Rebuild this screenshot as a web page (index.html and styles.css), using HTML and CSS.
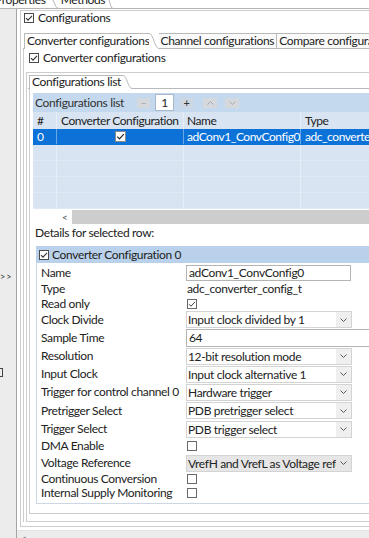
FILE: index.html
```html
<!DOCTYPE html>
<html lang="en">
<head>
  <meta charset="UTF-8">
  <meta name="viewport" content="width=device-width, initial-scale=1.0">
  <title>Converter configurations</title>
  <link rel="stylesheet" href="styles.css">
</head>
<body>
  <div class="view-tabs">
    <span class="view-tab first">Properties</span>
    <svg class="slant" width="11" height="9" viewBox="0 0 11 9"><path d="M0 -6 C5 -6 6 8.5 11 8.5" fill="none" stroke="#b4b4b4"/></svg>
    <span class="view-tab">Methods</span>
    <svg class="slant" width="6" height="9" viewBox="0 0 6 9"><path d="M0 -2 C3 -2 3 8.5 6 8.5" fill="none" stroke="#b4b4b4"/></svg>
  </div>

  <div class="workspace">
    <div class="side">
      <div class="side-arrows">&gt;&gt;</div>
      <div class="side-box"></div>
    </div>

    <div class="view">
      <div class="view-body">
        <div class="panel outer">
          <div class="check-row">
            <svg class="cb" width="10" height="10" viewBox="0 0 10 10"><rect x=".5" y=".5" width="9" height="9" fill="#fff" stroke="#4a4a4a"/><path d="M2 5.2L4 7.2L8 2.8" fill="none" stroke="#333" stroke-width="1.1"/></svg>
            <span>Configurations</span>
          </div>

          <div class="tab-row">
            <span class="tab selected">Converter configurations</span>
            <svg class="slant" width="10" height="16" viewBox="0 0 10 16"><path d="M0 0H0.5C4.5 0.5 5.5 15.5 10 15.5V16H0Z" fill="#fff"/><path d="M0 .5C4.5 .5 5.5 15.5 10 15.5" fill="none" stroke="#b9b9b9"/></svg>
            <span class="tab plain">Channel configurations</span>
            <span class="tab">Compare configurations</span>
          </div>

          <div class="tab-body">
            <div class="check-row">
              <svg class="cb" width="10" height="10" viewBox="0 0 10 10"><rect x=".5" y=".5" width="9" height="9" fill="#fff" stroke="#4a4a4a"/><path d="M2 5.2L4 7.2L8 2.8" fill="none" stroke="#333" stroke-width="1.1"/></svg>
              <span>Converter configurations</span>
            </div>

            <div class="panel list-panel">
              <div class="tab-row small">
                <span class="tab selected">Configurations list</span>
                <svg class="slant" width="9" height="14" viewBox="0 0 9 14"><path d="M0 0H0.5C4 0.5 5 13.5 9 13.5V14H0Z" fill="#fff"/><path d="M0 .5C4 .5 5 13.5 9 13.5" fill="none" stroke="#b9b9b9"/></svg>
              </div>

              <div class="list-body">
                <div class="table">
                  <div class="table-bar">
                    <span class="bar-title">Configurations list</span>
                    <span class="bar-btn off">&ndash;</span>
                    <span class="bar-input">1</span>
                    <span class="bar-btn plus">+</span>
                    <span class="bar-btn off up"><svg width="7" height="4" viewBox="0 0 7 4"><path d="M.5 3.5L3.5 .5L6.5 3.5" fill="none" stroke="#a9a9a9"/></svg></span>
                    <span class="bar-btn off down"><svg width="7" height="4" viewBox="0 0 7 4"><path d="M.5 .5L3.5 3.5L6.5 .5" fill="none" stroke="#a9a9a9"/></svg></span>
                  </div>

                  <div class="grid-head">
                    <span class="cell">#</span>
                    <span class="cell">Converter Configuration</span>
                    <span class="cell name">Name</span>
                    <span class="cell">Type</span>
                  </div>
                  <div class="grid-row selected">
                    <span class="cell">0</span>
                    <span class="cell center"><svg class="cb" width="11" height="11" viewBox="0 0 11 11"><rect x=".5" y=".5" width="10" height="10" fill="#fff" stroke="#8a8a8a"/><path d="M2.3 5.6L4.5 7.8L8.8 3.2" fill="none" stroke="#222" stroke-width="1.2"/></svg></span>
                    <span class="cell name">adConv1_ConvConfig0</span>
                    <span class="cell">adc_converter_config_t</span>
                  </div>
                  <div class="grid-row"><span class="cell"></span><span class="cell"></span><span class="cell"></span><span class="cell"></span></div>
                  <div class="grid-row"><span class="cell"></span><span class="cell"></span><span class="cell"></span><span class="cell"></span></div>
                  <div class="grid-row"><span class="cell"></span><span class="cell"></span><span class="cell"></span><span class="cell"></span></div>
                  <div class="grid-row"><span class="cell"></span><span class="cell"></span><span class="cell"></span><span class="cell"></span></div>

                  <div class="table-scroll">
                    <span class="scroll-left">&lt;</span>
                    <span class="scroll-thumb"></span>
                  </div>
                </div>

                <div class="details-label">Details for selected row:</div>

                <div class="group">
                  <div class="group-head">
                    <svg class="cb" width="10" height="10" viewBox="0 0 10 10"><rect x=".5" y=".5" width="9" height="9" fill="#fff" stroke="#4a4a4a"/><path d="M2 5.2L4 7.2L8 2.8" fill="none" stroke="#333" stroke-width="1.1"/></svg>
                    <span>Converter Configuration 0</span>
                  </div>

                  <div class="form">
                    <span class="label">Name</span>
                    <span class="field">adConv1_ConvConfig0</span>

                    <span class="label">Type</span>
                    <span class="value">adc_converter_config_t</span>

                    <span class="label">Read only</span>
                    <span class="value"><svg class="cb" width="10" height="10" viewBox="0 0 10 10"><rect x=".5" y=".5" width="9" height="9" fill="#fff" stroke="#6a6a6a"/><path d="M2 5.2L4 7.2L8 2.8" fill="none" stroke="#444" stroke-width="1"/></svg></span>

                    <span class="label">Clock Divide</span>
                    <span class="select"><span class="select-text">Input clock divided by 1</span><span class="select-arrow"><svg width="7" height="4" viewBox="0 0 7 4"><path d="M.5 .5L3.5 3.5L6.5 .5" fill="none" stroke="#5a5a5a"/></svg></span></span>

                    <span class="label">Sample Time</span>
                    <span class="field wide">64</span>

                    <span class="label">Resolution</span>
                    <span class="select"><span class="select-text">12-bit resolution mode</span><span class="select-arrow"><svg width="7" height="4" viewBox="0 0 7 4"><path d="M.5 .5L3.5 3.5L6.5 .5" fill="none" stroke="#5a5a5a"/></svg></span></span>

                    <span class="label">Input Clock</span>
                    <span class="select"><span class="select-text">Input clock alternative 1</span><span class="select-arrow"><svg width="7" height="4" viewBox="0 0 7 4"><path d="M.5 .5L3.5 3.5L6.5 .5" fill="none" stroke="#5a5a5a"/></svg></span></span>

                    <span class="label">Trigger for control channel 0</span>
                    <span class="select"><span class="select-text">Hardware trigger</span><span class="select-arrow"><svg width="7" height="4" viewBox="0 0 7 4"><path d="M.5 .5L3.5 3.5L6.5 .5" fill="none" stroke="#5a5a5a"/></svg></span></span>

                    <span class="label">Pretrigger Select</span>
                    <span class="select"><span class="select-text">PDB pretrigger select</span><span class="select-arrow"><svg width="7" height="4" viewBox="0 0 7 4"><path d="M.5 .5L3.5 3.5L6.5 .5" fill="none" stroke="#5a5a5a"/></svg></span></span>

                    <span class="label">Trigger Select</span>
                    <span class="select"><span class="select-text">PDB trigger select</span><span class="select-arrow"><svg width="7" height="4" viewBox="0 0 7 4"><path d="M.5 .5L3.5 3.5L6.5 .5" fill="none" stroke="#5a5a5a"/></svg></span></span>

                    <span class="label">DMA Enable</span>
                    <span class="value"><svg class="cb" width="10" height="10" viewBox="0 0 10 10"><rect x=".5" y=".5" width="9" height="9" fill="#fff" stroke="#6a6a6a"/></svg></span>

                    <span class="label">Voltage Reference</span>
                    <span class="select disabled"><span class="select-text">VrefH and VrefL as Voltage reference</span><span class="select-arrow"><svg width="7" height="4" viewBox="0 0 7 4"><path d="M.5 .5L3.5 3.5L6.5 .5" fill="none" stroke="#5a5a5a"/></svg></span></span>

                    <span class="label">Continuous Conversion</span>
                    <span class="value"><svg class="cb" width="10" height="10" viewBox="0 0 10 10"><rect x=".5" y=".5" width="9" height="9" fill="#fff" stroke="#6a6a6a"/></svg></span>

                    <span class="label">Internal Supply Monitoring</span>
                    <span class="value"><svg class="cb" width="10" height="10" viewBox="0 0 10 10"><rect x=".5" y=".5" width="9" height="9" fill="#fff" stroke="#6a6a6a"/></svg></span>
                  </div>
                </div>
              </div>
            </div>
          </div>
        </div>
      </div>

      <div class="view-scroll"><span>&lt;</span></div>
    </div>
  </div>
</body>
</html>
```

FILE: styles.css
```css
* {
  box-sizing: border-box;
}

body {
  margin: 0;
  width: 369px;
  height: 538px;
  overflow: hidden;
  background-color: #fff;
  color: #222;
  font-family: Lato, "Noto Sans", sans-serif;
  font-size: 12px;
  line-height: 14px;
  letter-spacing: -0.35px;
}

svg {
  display: block;
  flex: none;
}

/* top view tabs, cut off by the window */
.view-tabs {
  display: flex;
  height: 9px;
  overflow: hidden;
  border-bottom: 1px solid #b4b4b4;
}

.view-tab {
  line-height: 12px;
  margin-top: -6px;
  padding: 0 2px;
  white-space: nowrap;
}

.view-tab.first {
  margin-left: -7px;
}

/* left strip + view */
.workspace {
  display: flex;
}

.side {
  width: 16px;
  flex: none;
  background-color: #ececec;
  padding-top: 263px;
  overflow: hidden;
}

.side-arrows {
  font-size: 9px;
  line-height: 10px;
  letter-spacing: 1px;
  color: #333;
  white-space: nowrap;
}

.side-box {
  width: 9px;
  height: 9px;
  margin: 86px 0 0 -6px;
  border: 1px solid #444;
}

.view {
  flex: 1;
  min-width: 0;
  border-left: 1px solid #a5a5a5;
}

.view-body {
  padding: 1px 0 3px 3px;
}

.view-scroll {
  height: 17px;
  background-color: #ececec;
  border-top: 1px solid #e2e2e2;
  padding: 1px 0 0 4px;
  font-size: 10px;
  line-height: 12px;
  color: #777;
}

/* nested panels */
.panel {
  border-top: 1px solid #cdcdcd;
  border-left: 1px solid #cdcdcd;
  border-bottom: 1px solid #cdcdcd;
}

.outer {
  padding: 0 0 4px 2px;
}

.check-row {
  display: flex;
  align-items: center;
  gap: 4px;
  height: 14px;
  margin-left: 1px;
  white-space: nowrap;
}

.tab-row {
  display: flex;
  align-items: flex-end;
  height: 16px;
  margin-top: 8px;
  padding-left: 1px;
  border-bottom: 1px solid #b9b9b9;
  white-space: nowrap;
}

.tab {
  height: 15px;
  line-height: 13px;
  padding: 0 2px;
  border-top: 1px solid #b9b9b9;
  border-left: 1px solid #b9b9b9;
  background-color: #fafafa;
}

.tab.plain {
  border-left: none;
  padding-left: 1px;
}

.tab.selected {
  height: 16px;
  margin-bottom: -1px;
  padding-right: 0;
  background-color: #fff;
}

.tab-row .slant {
  margin-bottom: -1px;
}

.tab-body {
  border-left: 1px solid #cdcdcd;
  padding: 2px 0 0 4px;
}

.list-panel {
  margin: 7px 0 0 -2px;
  padding: 0 0 7px 1px;
}

.tab-row.small {
  height: 16px;
  margin-top: 0;
  padding-top: 2px;
}

.tab-row.small .tab {
  height: 13px;
  line-height: 12px;
  padding-right: 2px;
}

.tab-row.small .tab.selected {
  height: 14px;
}

.list-body {
  margin-left: 1px;
  padding: 4px 0 9px 3px;
  border-left: 1px solid #cdcdcd;
  border-bottom: 1px solid #cdcdcd;
}

/* configurations table */
.table {
  width: 400px;
}

.table-bar {
  display: flex;
  align-items: center;
  height: 19px;
  padding-left: 2px;
  background-color: #c4d8ee;
  color: #333;
  white-space: nowrap;
}

.bar-title {
  width: 102px;
}

.bar-btn {
  display: flex;
  align-items: center;
  justify-content: center;
  width: 13px;
  height: 10px;
  background-color: #d5d9de;
  font-size: 11px;
  line-height: 10px;
  color: #a9a9a9;
}

.bar-btn.plus {
  color: #333;
  background-color: #cfd8e2;
}

.bar-btn.up {
  width: 14px;
  margin-left: 10px;
}

.bar-btn.down {
  width: 14px;
  margin-left: 8px;
}

.bar-input {
  width: 19px;
  height: 17px;
  margin: 0 6px 0 5px;
  background-color: #fff;
  border: 1px solid #a9b9cc;
  text-align: center;
  line-height: 15px;
  color: #222;
}

.grid-head,
.grid-row {
  display: grid;
  grid-template-columns: 24px 127px 117px 132px;
  background-color: #d8e4f2;
  letter-spacing: -0.45px;
}

.grid-head {
  height: 17px;
  line-height: 17px;
}

.grid-row {
  height: 16px;
  line-height: 15px;
  border-bottom: 1px solid #e0e9f4;
}

.grid-row.selected {
  background-color: #0c72d8;
  border-bottom-color: #0c72d8;
  color: #fff;
}

.cell {
  padding-left: 4px;
  white-space: nowrap;
  overflow: hidden;
  border-right: 1px solid #e6eef7;
}

.cell.name {
  padding-left: 3px;
}

.cell.center {
  display: flex;
  align-items: center;
  justify-content: center;
  padding-left: 0;
}

.grid-row.selected .cell {
  border-right-color: #6aa7e6;
}

.table-scroll {
  display: flex;
  height: 14px;
  margin-top: 1px;
}

.scroll-left {
  width: 39px;
  padding-left: 29px;
  font-size: 10px;
  line-height: 14px;
  color: #444;
}

.scroll-thumb {
  flex: 1;
  background-color: #cdcdcd;
}

.details-label {
  margin: 2px 0 0 2px;
  height: 14px;
}

/* details group */
.group {
  width: 360px;
  margin: 6px 0 0 3px;
}

.group-head {
  display: flex;
  align-items: center;
  gap: 3px;
  height: 17px;
  padding-left: 3px;
  background-color: #b9d1ea;
  white-space: nowrap;
}

.form {
  display: grid;
  grid-template-columns: 145px 1fr;
  grid-template-rows: 17px 15px 15px 17px 19px 18px 18px 18px 19px 18px 16px 18px 14px 14px;
  align-items: center;
  padding: 1px 0 3px 4px;
  border-left: 1px solid #cbd7e4;
  border-bottom: 1px solid #cbd7e4;
}

.label {
  white-space: nowrap;
}

.value {
  padding-left: 1px;
  white-space: nowrap;
}

.field {
  width: 165px;
  height: 16px;
  padding-left: 2px;
  border: 1px solid #b4b4b4;
  line-height: 14px;
  white-space: nowrap;
}

.field.wide {
  width: 200px;
  height: 18px;
  line-height: 16px;
}

.select {
  display: flex;
  width: 166px;
  height: 17px;
  border: 1px solid #d3d3d3;
  background-color: #fff;
}

.select-text {
  flex: 1;
  padding-left: 1px;
  line-height: 15px;
  white-space: nowrap;
  overflow: hidden;
}

.select-arrow {
  display: flex;
  align-items: center;
  justify-content: center;
  width: 15px;
  background-color: #efefef;
}

.select.disabled {
  background-color: #e6e6e6;
}

.select.disabled .select-arrow {
  background-color: transparent;
}
```
